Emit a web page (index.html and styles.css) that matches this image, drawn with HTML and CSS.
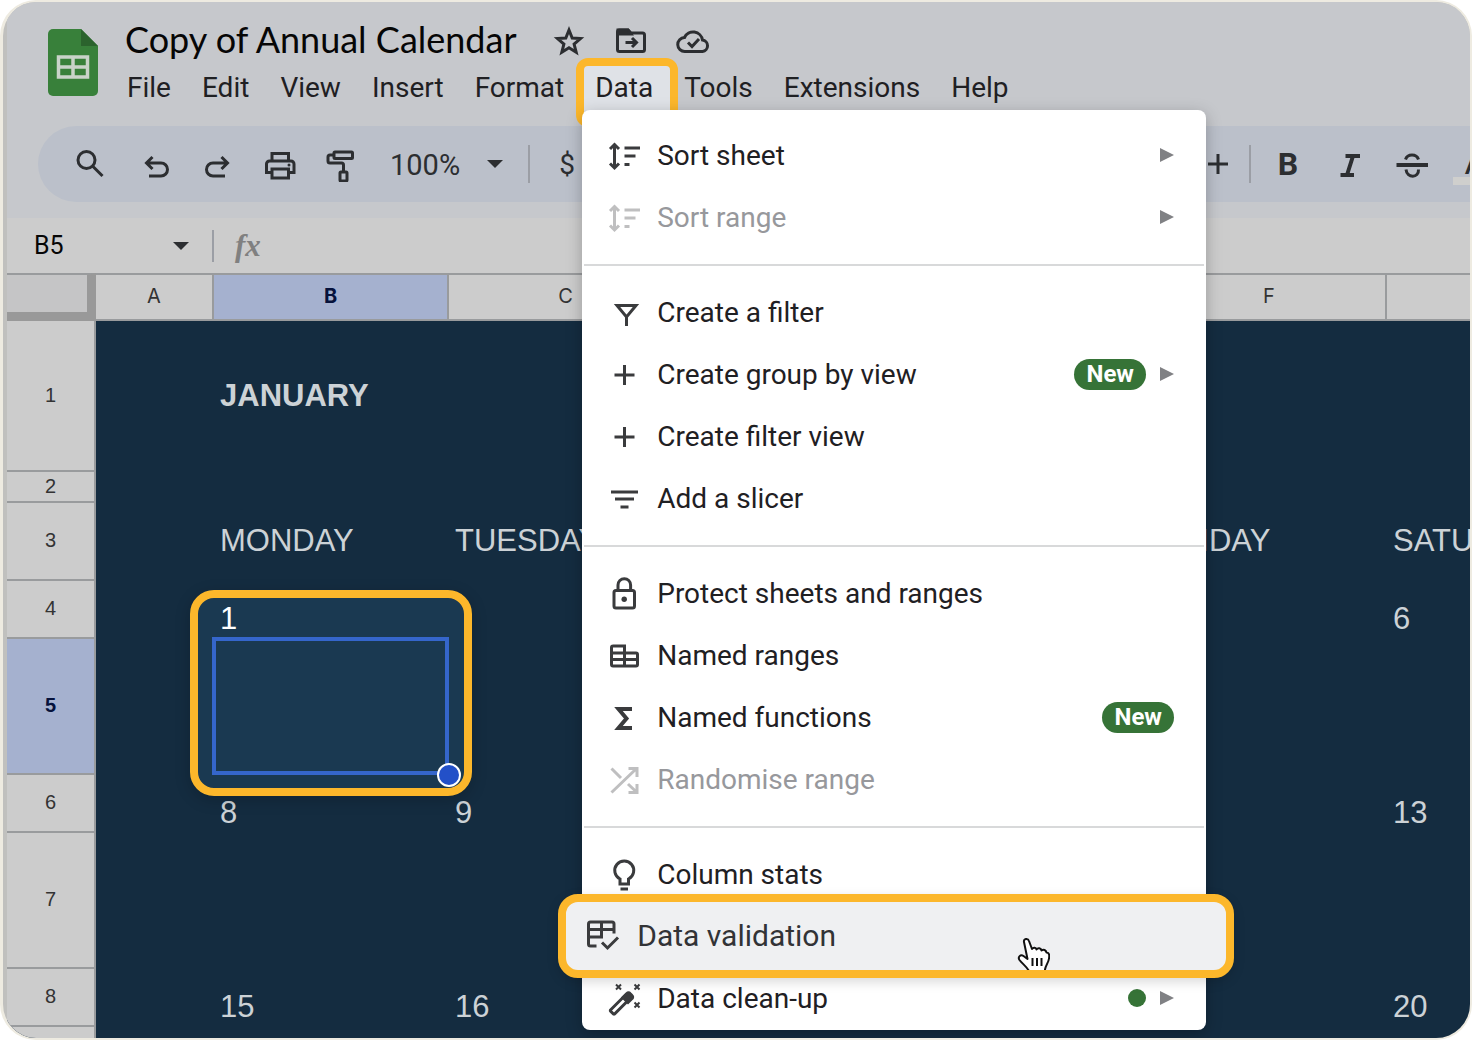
FILE: index.html
```html
<!DOCTYPE html>
<html lang="en">
<head>
  <meta charset="UTF-8">
  <meta name="viewport" content="width=device-width, initial-scale=1.0">
  <title>Copy of Annual Calendar</title>
  <link rel="stylesheet" href="styles.css">
</head>
<body>
  <div class="window">
    <!-- Title and menu bar -->
    <header class="header">
      <svg class="logo" viewBox="0 0 50 68" aria-hidden="true">
        <path fill="#38803a" d="M5 1h28l17 17v45a5 5 0 0 1-5 5H5a5 5 0 0 1-5-5V6a5 5 0 0 1 5-5z"/>
        <path fill="#2b632d" d="M33 1l17 17H33z"/>
        <path fill="none" stroke="#c9d3c9" stroke-width="3.5" d="M10.500 29h29v20h-29zM10.500 39h29M25 29v20"/>
      </svg>
      <div class="titles">
        <div class="title-row">
          <h1>Copy of Annual Calendar</h1>
          <button class="icon-button" aria-label="Star">
            <svg class="icon" viewBox="0 0 36 36"><path d="M18 7l3.200 8 8.300.6-6.400 5.400 2.100 8.300L18 24.800l-7.200 4.500 2.100-8.300-6.400-5.400 8.300-.6z"/></svg>
          </button>
          <button class="icon-button" aria-label="Move">
            <svg class="icon" viewBox="0 0 36 36"><path d="M4.500 9v17.500a2 2 0 0 0 2 2h23a2 2 0 0 0 2-2V12a2 2 0 0 0-2-2H18l-3-3H6.500a2 2 0 0 0-2 2z"/><path class="fill" d="M5 11V7h10l3 4z"/><path d="M12.500 19.500H23M19 15l4.500 4.500L19 24"/></svg>
          </button>
          <button class="icon-button" aria-label="Document status">
            <svg class="icon" viewBox="0 0 36 36"><path d="M10 28.500a7 7 0 0 1-.5-14 9.500 9.500 0 0 1 18 2.500 5.800 5.800 0 0 1 0 11.500z"/><path d="M13 19.500l4 4 7-7.500"/></svg>
          </button>
        </div>
        <nav>
          <ul class="menubar">
            <li><button>File</button></li>
            <li><button>Edit</button></li>
            <li><button>View</button></li>
            <li><button>Insert</button></li>
            <li><button>Format</button></li>
            <li class="open">
              <span class="tab-highlight"></span>
              <button aria-expanded="true">Data</button>

              <!-- Data menu -->
              <div class="menu">
                <button class="item">
                  <svg class="icon" viewBox="0 0 36 36"><path d="M8.500 8v22M4 12l4.500-4.500L13 12M4 26.500L8.500 31l4.500-4.500M18.500 11H34M18.500 19h11M18.500 27.500h5"/></svg>
                  <span>Sort sheet</span><i class="arrow"></i>
                </button>
                <button class="item" disabled>
                  <svg class="icon" viewBox="0 0 36 36"><path d="M8.500 8v22M4 12l4.500-4.500L13 12M4 26.500L8.500 31l4.500-4.500M18.500 11H34M18.500 19h11M18.500 27.500h5"/></svg>
                  <span>Sort range</span><i class="arrow"></i>
                </button>
                <hr>
                <button class="item">
                  <svg class="icon" viewBox="0 0 36 36"><path d="M11 11.500h19L20.500 23zM20.500 21v11"/></svg>
                  <span>Create a filter</span>
                </button>
                <button class="item">
                  <svg class="icon" viewBox="0 0 36 36"><path d="M8.500 19h20M18.500 9v20"/></svg>
                  <span>Create group by view</span><b class="badge">New</b><i class="arrow"></i>
                </button>
                <button class="item">
                  <svg class="icon" viewBox="0 0 36 36"><path d="M8.500 19h20M18.500 9v20"/></svg>
                  <span>Create filter view</span>
                </button>
                <button class="item">
                  <svg class="icon" viewBox="0 0 36 36"><path d="M5 12h27M9 19h19M14.500 27h8"/></svg>
                  <span>Add a slicer</span>
                </button>
                <hr>
                <button class="item">
                  <svg class="icon" viewBox="0 0 36 36"><rect x="8" y="15.500" width="20.500" height="17.500" rx="2"/><path d="M12 15v-5a6.300 6.300 0 0 1 12.600 0v5"/><circle class="dot-fill" cx="18.200" cy="24.200" r="2.700"/></svg>
                  <span>Protect sheets and ranges</span>
                </button>
                <button class="item">
                  <svg class="icon" viewBox="0 0 36 36"><path d="M6.500 9h12v7H30a1.500 1.500 0 0 1 1.500 1.500v10A1.500 1.500 0 0 1 30 29H7a1.500 1.500 0 0 1-1.500-1.500v-17A1.500 1.500 0 0 1 7 9M5.500 16h13v13M5.500 22.500h26"/></svg>
                  <span>Named ranges</span>
                </button>
                <button class="item">
                  <svg class="icon heavy" viewBox="0 0 36 36"><path d="M26 10H12.500l8 9.500-8 9.500H26"/></svg>
                  <span>Named functions</span><b class="badge">New</b>
                </button>
                <button class="item" disabled>
                  <svg class="icon" viewBox="0 0 36 36"><path d="M5.500 31.500L30 8M22.500 7.500h8.500v8.500M5.500 7.500l9.500 9.500M22 23l8.500 8M31 23v8.500h-8.500"/></svg>
                  <span>Randomise range</span>
                </button>
                <hr>
                <button class="item">
                  <svg class="icon" viewBox="0 0 36 36"><path d="M14 28v-5a9.500 9.500 0 1 1 8.500 0v5z"/><path d="M14.500 33h7.500"/></svg>
                  <span>Column stats</span>
                </button>
                <div class="slot">
                  <button class="item item-highlight">
                    <svg class="icon" viewBox="0 0 36 36"><path d="M12.500 29H6.500a2 2 0 0 1-2-2V7a2 2 0 0 1 2-2H28a2 2 0 0 1 2 2v9.500M4.500 12.500H30M17.500 5v14M4.500 20H19M18 25.500l5.500 5.500L34 20.500"/></svg>
                    <span>Data validation</span>
                    <svg class="pointer" viewBox="0 0 34 40" aria-hidden="true">
                      <path fill="#fff" stroke="#111" stroke-width="2" stroke-linejoin="round" d="M8 4c-.7-3.500 4-4 5-1l3 8c1.500-2 4-1.500 4.500.5 1.500-2 4.500-1.500 5 1 2-1.500 4.500-.5 5 2 3 0 3 3 2.500 6-.5 4-3 6-4 11v4H14c-1-5-7-9-10.500-13.500-2-3 1-6 4-4l4 3z"/>
                      <path fill="none" stroke="#111" stroke-width="2" d="M16.500 20v8M21 20v8M25.500 20v8"/>
                    </svg>
                  </button>
                </div>
                <button class="item">
                  <svg class="icon" viewBox="0 0 36 36"><path d="M4.500 30L20 14.500l4 4L8.500 34a1 1 0 0 1-1 0l-3-3a1 1 0 0 1 0-1z"/><path class="fill" d="M17 17.500l4-4a2 2 0 0 1 3 0l2 2a2 2 0 0 1 0 3l-4 4z"/><path class="spark" d="M10 4.500l5 5M15 4.500l-5 5M28.500 4.500l5 5M33.500 4.500l-5 5M28.500 22.500l5 5M33.500 22.500l-5 5"/></svg>
                  <span>Data clean-up</span><b class="dot"></b><i class="arrow"></i>
                </button>
              </div>
            </li>
            <li><button>Tools</button></li>
            <li><button>Extensions</button></li>
            <li><button>Help</button></li>
          </ul>
        </nav>
      </div>
    </header>

    <!-- Toolbar -->
    <div class="toolbar-row">
      <div class="toolbar">
        <button class="tool tool-search" aria-label="Search the menus">
          <svg class="icon" viewBox="0 0 36 36"><circle cx="15.500" cy="14" r="8.500"/><path d="M21.500 20l10 10"/></svg>
        </button>
        <button class="tool" aria-label="Undo">
          <svg class="icon" viewBox="0 0 36 36"><path d="M14.500 11L8.500 17l6 6M9 17h14a6.500 6.500 0 0 1 0 13H11"/></svg>
        </button>
        <button class="tool" aria-label="Redo">
          <svg class="icon" viewBox="0 0 36 36"><path d="M21.500 11l6 6-6 6M27 17H13a6.500 6.500 0 0 0 0 13h12"/></svg>
        </button>
        <button class="tool" aria-label="Print">
          <svg class="icon" viewBox="0 0 36 36"><path d="M10 14V7.500h16.500V14M10 26.500H4.500V18a3 3 0 0 1 3-3h21.500a3 3 0 0 1 3 3v8.500H26.500"/><rect x="10" y="23" width="16.500" height="9"/><circle class="dot-fill" cx="27" cy="19" r="1.500"/></svg>
        </button>
        <button class="tool" aria-label="Paint format">
          <svg class="icon" viewBox="0 0 36 36"><rect x="10" y="6" width="18.500" height="6.500" rx="1"/><path d="M10 9H6a2 2 0 0 0-2 2v4a2 2 0 0 0 2 2h11.500a2 2 0 0 1 2 2v7"/><rect x="16" y="26" width="7" height="9" rx="1"/></svg>
        </button>
        <div class="zoom">
          <select aria-label="Zoom"><option>100%</option></select>
          <i class="caret"></i>
        </div>
        <span class="divider"></span>
        <button class="tool currency" aria-label="Format as currency">$</button>
        <div class="tools-right">
          <button class="tool" aria-label="Increase font size">
            <svg class="icon" viewBox="0 0 36 36"><path d="M8 18h20M18 8v20"/></svg>
          </button>
          <span class="divider"></span>
          <button class="tool bold" aria-label="Bold">B</button>
          <button class="tool" aria-label="Italic">
            <svg class="icon heavy" viewBox="0 0 36 36"><path d="M13.500 10H28M8.500 29H22M21 10l-6 19"/></svg>
          </button>
          <button class="tool" aria-label="Strikethrough">
            <svg class="icon" viewBox="0 0 36 36"><path class="strike" d="M2.500 19H34"/><path d="M11.500 13.500c2-6 11-6 13 0M12 23.500c1 9 13 9 12.500 0"/></svg>
          </button>
          <button class="tool text-colour" aria-label="Text colour">A</button>
        </div>
      </div>
    </div>

    <!-- Name box and formula bar -->
    <div class="formula-bar">
      <input class="name-box" type="text" value="B5" aria-label="Name box">
      <i class="caret"></i>
      <span class="divider"></span>
      <label class="fx" for="formula">fx</label>
      <input class="formula" id="formula" type="text">
    </div>

    <!-- Sheet -->
    <table class="sheet">
      <colgroup>
        <col class="col-rows"><col class="col-a"><col class="col-wide"><col class="col-wide"><col class="col-wide"><col class="col-day"><col class="col-day"><col class="col-wide">
      </colgroup>
      <thead>
        <tr>
          <th class="corner"></th>
          <th>A</th>
          <th class="selected">B</th>
          <th>C</th>
          <th>D</th>
          <th>E</th>
          <th>F</th>
          <th>G</th>
        </tr>
      </thead>
      <tbody>
        <tr class="row-month"><th>1</th><td></td><td class="month">JANUARY</td><td></td><td></td><td></td><td></td><td></td></tr>
        <tr class="row-gap"><th>2</th><td></td><td></td><td></td><td></td><td></td><td></td><td></td></tr>
        <tr class="row-days"><th>3</th><td></td><td>MONDAY</td><td>TUESDAY</td><td>WEDNESDAY</td><td>THURSDAY</td><td>FRIDAY</td><td>SATURDAY</td></tr>
        <tr class="row-dates"><th>4</th><td></td><td><span class="lit">1</span></td><td>2</td><td>3</td><td>4</td><td>5</td><td>6</td></tr>
        <tr class="row-notes"><th class="selected">5</th><td></td><td class="active"><div class="cell-highlight"></div><div class="selection"></div></td><td></td><td></td><td></td><td></td><td></td></tr>
        <tr class="row-dates"><th>6</th><td></td><td>8</td><td>9</td><td>10</td><td>11</td><td>12</td><td>13</td></tr>
        <tr class="row-notes"><th>7</th><td></td><td></td><td></td><td></td><td></td><td></td><td></td></tr>
        <tr class="row-dates"><th>8</th><td></td><td>15</td><td>16</td><td>17</td><td>18</td><td>19</td><td>20</td></tr>
        <tr class="row-notes"><th></th><td></td><td></td><td></td><td></td><td></td><td></td><td></td></tr>
      </tbody>
    </table>
  </div>
</body>
</html>
```
FILE: styles.css
```css
* {
  box-sizing: border-box;
}

body {
  margin: 0;
  background-color: #fff;
  font-family: Roboto, Arial, sans-serif;
  color: #1f2023;
}

button,
input,
select {
  margin: 0;
  padding: 0;
  border: none;
  background: none;
  font: inherit;
  color: inherit;
}

button {
  cursor: pointer;
}

.window {
  height: 100vh;
  border: 2px solid #eeebe1;
  border-left-width: 3px;
  border-radius: 36px;
  padding-left: 4px;
  background-color: #c0c0be;
  overflow: hidden;
}

/* Icons */
.icon {
  display: block;
  flex: none;
  width: 36px;
  height: 36px;
  fill: none;
  stroke: currentColor;
  stroke-width: 3;
}

.icon.heavy,
.icon .strike {
  stroke-width: 4;
}

.icon .fill,
.icon .dot-fill {
  fill: currentColor;
}

.icon .dot-fill {
  stroke: none;
}

.icon .spark {
  stroke-width: 2;
}

.caret {
  flex: none;
  border: 8px solid transparent;
  border-top-color: #2c2e31;
  border-bottom: none;
}

.divider {
  flex: none;
  width: 2px;
  height: 38px;
  background-color: #9b9ea5;
}

/* Header */
.header {
  display: flex;
  gap: 14px;
  padding: 14px 0 16px 41px;
  background-color: #c6c8cc;
}

.logo {
  flex: none;
  width: 50px;
  height: 68px;
  margin-top: 12px;
}

.title-row {
  display: flex;
  align-items: center;
  gap: 26px;
  height: 50px;
  padding-left: 13px;
  color: #2c2e31;
}

h1 {
  margin: 0 8px 4px 0;
  font-family: Lato, sans-serif;
  font-size: 36px;
  font-weight: 400;
  line-height: 46px;
  color: #060606;
  white-space: nowrap;
}

.menubar {
  display: flex;
  margin: 0;
  padding: 0;
  list-style: none;
  font-size: 28px;
}

.menubar > li > button {
  display: block;
  height: 44px;
  padding: 0 16px 2px 15px;
  white-space: nowrap;
}

.open {
  position: relative;
  z-index: 5;
}

.open > button {
  position: relative;
}

.tab-highlight {
  position: absolute;
  inset: -8px -9px -17px -4px;
  border: 8px solid #fcb72b;
  border-radius: 12px;
  background-color: #dfe2e7;
}

/* Data menu */
.menu {
  position: absolute;
  top: 44px;
  left: 2px;
  width: 624px;
  padding: 14px 0 1px;
  border-radius: 8px;
  background-color: #fff;
  box-shadow: 0 4px 16px rgba(0, 0, 0, 0.25);
}

.menu hr {
  height: 2px;
  margin: 16px 2px 15px;
  border: none;
  background-color: #d8d9da;
}

.item {
  display: flex;
  align-items: center;
  width: 100%;
  height: 62px;
  padding: 0 32px 0 24px;
  text-align: left;
}

.item .icon {
  color: #3a3b3d;
}

.item span {
  flex: 1;
  padding-left: 15px;
}

.item:disabled {
  color: #97989c;
}

.item:disabled .icon {
  color: #bfbfc0;
}

.arrow {
  margin-left: 14px;
  border: 7px solid transparent;
  border-left: 14px solid #808184;
  border-right: none;
}

.badge {
  width: 72px;
  border-radius: 16px;
  background-color: #367337;
  color: #fff;
  font-size: 24px;
  line-height: 31px;
  text-align: center;
}

.dot {
  width: 18px;
  height: 18px;
  border-radius: 50%;
  background-color: #367337;
}

.slot {
  position: relative;
  z-index: 1;
  height: 62px;
}

.item-highlight {
  position: absolute;
  inset: -11px -28px -11px -24px;
  width: auto;
  height: auto;
  padding: 0 20px 2px 18px;
  border: 8px solid #fcb72b;
  border-radius: 20px;
  background-color: #eff0f2;
  box-shadow: 0 4px 12px rgba(0, 0, 0, 0.15);
  color: #323336;
  font-size: 30px;
  overflow: hidden;
}

.item-highlight span {
  padding-left: 17px;
}

.pointer {
  position: absolute;
  top: 36px;
  left: 450px;
  width: 34px;
  height: 40px;
}

/* Toolbar */
.toolbar-row {
  padding: 0 0 16px 31px;
  background-color: #c6c8cc;
}

.toolbar {
  display: flex;
  align-items: center;
  height: 76px;
  padding-left: 20px;
  border-radius: 38px 0 0 38px;
  background-color: #bbc0ca;
  color: #2c2e31;
}

.tool {
  position: relative;
  display: flex;
  align-items: center;
  justify-content: center;
  flex: none;
  width: 62px;
  height: 62px;
}

.tool-search {
  margin-right: 5px;
}

.zoom {
  display: flex;
  align-items: center;
  width: 130px;
  margin: 0 8px 0 17px;
}

.zoom select {
  width: 97px;
  padding-top: 2px;
  appearance: none;
  font-size: 29px;
}

.currency {
  width: 36px;
  margin-left: 19px;
  font-size: 28px;
}

.tools-right {
  display: flex;
  align-items: center;
  margin-left: auto;
  margin-right: -35px;
}

.tools-right .divider {
  margin-right: 6px;
}

.bold {
  font-size: 32px;
  font-weight: 700;
}

.text-colour {
  font-size: 28px;
  font-weight: 500;
}

.text-colour::after {
  content: "";
  position: absolute;
  bottom: 10px;
  left: 10px;
  width: 42px;
  height: 8px;
  background-color: #cfcfcd;
}

/* Formula bar */
.formula-bar {
  display: flex;
  align-items: center;
  height: 55px;
  padding-left: 27px;
  background-color: #ccc;
}

.name-box {
  width: 139px;
  font-size: 25px;
  color: #060606;
}

.formula-bar .divider {
  height: 32px;
  margin: 0 21px 0 23px;
}

.fx {
  font-family: "Liberation Serif", serif;
  font-size: 31px;
  font-style: italic;
  font-weight: 700;
  color: #808080;
}

.formula {
  flex: 1;
  margin-left: 16px;
  font-size: 25px;
}

/* Sheet */
.sheet {
  width: 1614px;
  table-layout: fixed;
  border-spacing: 0;
  background-color: #142c40;
  color: #ccd2d6;
  font-family: "Liberation Sans", Arial, sans-serif;
  font-size: 31px;
  line-height: 36px;
}

.col-rows {
  width: 89px;
}

.col-a {
  width: 118px;
}

.col-wide {
  width: 235px;
}

.col-day {
  width: 234px;
}

.sheet th {
  padding: 0 0 2px;
  border-right: 2px solid #999b9d;
  border-bottom: 2px solid #999b9d;
  background-color: #ccc;
  color: #333;
  font-size: 20px;
  font-weight: 400;
  line-height: 24px;
}

.sheet thead th {
  height: 48px;
  border-top: 2px solid #999b9d;
  font-family: Inter, Arial, sans-serif;
}

.sheet th.selected {
  background-color: #a5b1cf;
  color: #06123c;
  font-weight: 700;
}

.sheet th.corner {
  border-right: 9px solid #999;
  border-bottom: 9px solid #999;
  background-color: #c5c5c6;
}

.sheet td {
  padding: 0 0 2px 6px;
  white-space: nowrap;
}

.row-month {
  height: 151px;
}

.month {
  font-weight: 700;
}

.row-gap {
  height: 31px;
}

.row-days {
  height: 78px;
}

.row-dates {
  height: 58px;
}

.row-dates td {
  vertical-align: bottom;
}

.row-notes {
  height: 136px;
}

.lit {
  position: relative;
  z-index: 2;
  color: #fff;
}

.sheet .active {
  position: relative;
  padding: 0;
}

.cell-highlight {
  position: absolute;
  inset: -49px -23px -21px -24px;
  border: 8px solid #fcb72b;
  border-radius: 24px;
  background-color: #1a3951;
  box-shadow: 0 4px 16px rgba(0, 0, 0, 0.2);
}

.selection {
  position: absolute;
  inset: -2px 0 0 -2px;
  border: 4px solid #3566cb;
}

/* Fill handle */
.selection::after {
  content: "";
  position: absolute;
  right: -14px;
  bottom: -14px;
  width: 20px;
  height: 20px;
  margin: 0 -2px -2px 0;
  border: 2px solid #fff;
  border-radius: 50%;
  background-color: #2350c8;
}
```
